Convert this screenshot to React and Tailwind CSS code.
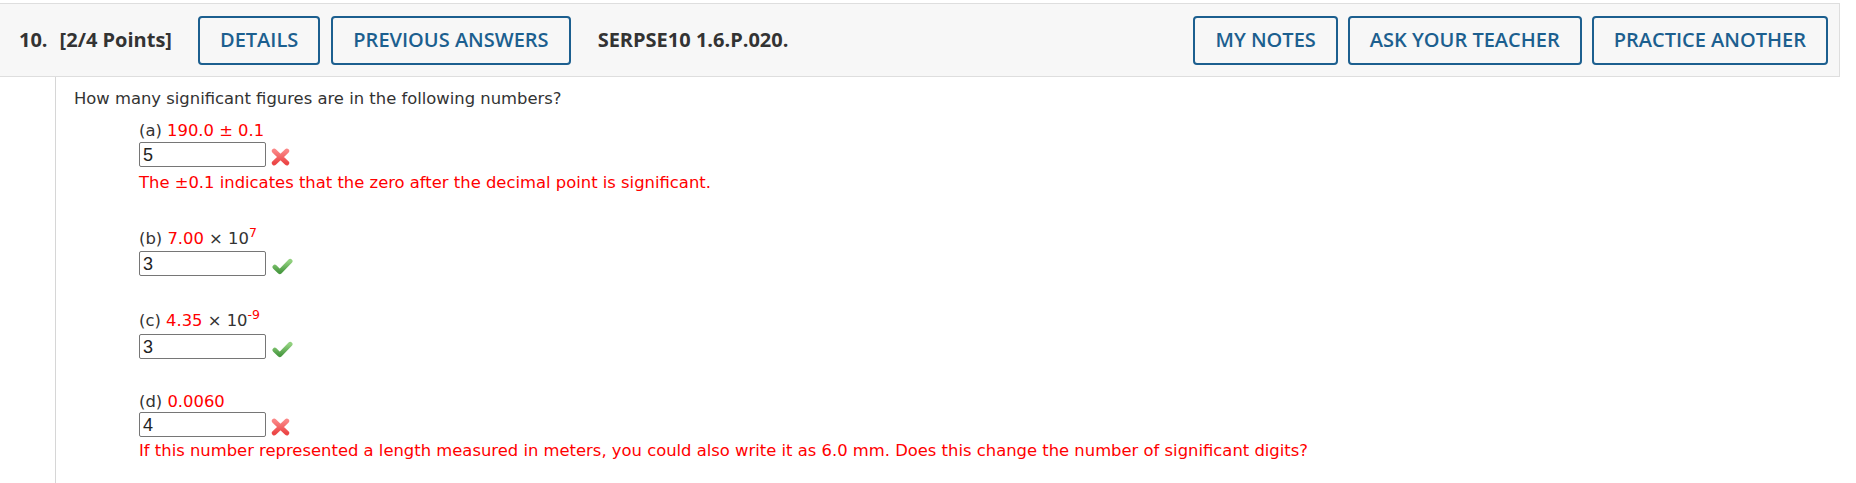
import React from "react";

const HEAD_FONT = { fontFamily: '"Open Sans", "Liberation Sans", sans-serif' };
const BODY_FONT = { fontFamily: '"DejaVu Sans", Verdana, sans-serif' };

function HeaderButton({ children }) {
  return (
    <button className="h-[49px] px-[20px] rounded-[4px] border-2 border-[#1c5f8f] text-[#1c5f8f] text-[20px] font-semibold bg-[#f7f7f7] leading-none">
      {children}
    </button>
  );
}

function WrongIcon() {
  return (
    <svg width="19" height="18" viewBox="0 0 19 18" className="mb-[1px]">
      <defs>
        <linearGradient id="xg" x1="0" y1="0" x2="0" y2="1">
          <stop offset="0" stopColor="#fa8585" />
          <stop offset="1" stopColor="#ec4646" />
        </linearGradient>
      </defs>
      <path d="M3.2 3 L15.8 15 M15.8 3 L3.2 15" stroke="url(#xg)" strokeWidth="4.8" strokeLinecap="round" fill="none" />
    </svg>
  );
}

function RightIcon() {
  return (
    <svg width="21" height="17" viewBox="0 0 21 17" className="mb-[1px] ml-[1px]">
      <defs>
        <linearGradient id="cg" x1="0" y1="0" x2="0" y2="1">
          <stop offset="0" stopColor="#92d17f" />
          <stop offset="1" stopColor="#4a9a42" />
        </linearGradient>
      </defs>
      <path d="M2.8 9 L7.8 13.8 L18.2 3.2" stroke="url(#cg)" strokeWidth="4.6" strokeLinecap="round" strokeLinejoin="round" fill="none" />
    </svg>
  );
}

function AnswerBox({ value, correct, className = "" }) {
  return (
    <div className={`flex items-end gap-[5px] ${className}`}>
      <div
        className="w-[127px] h-[25px] border border-[#767676] rounded-[2px] bg-white pl-[3px] flex items-center text-[18px] text-[#222]"
        style={{ fontFamily: '"Liberation Sans", Arial, sans-serif' }}
      >
        {value}
      </div>
      {correct ? <RightIcon /> : <WrongIcon />}
    </div>
  );
}

function Sup({ children }) {
  return <span className="relative -top-[7px] text-[12.5px] leading-none text-[#ff0000]">{children}</span>;
}

export default function App() {
  return (
    <div className="w-[1856px] h-[483px] bg-white overflow-hidden">
      {/* question header */}
      <div
        className="mt-[3px] w-[1840px] h-[74px] bg-[#f7f7f7] border-t border-r border-b border-[#dedede] flex items-center pl-[19px] pr-[11px]"
        style={HEAD_FONT}
      >
        <div className="text-[20px] font-bold text-[#333] w-[179px] whitespace-nowrap">
          10.<span className="ml-[12px]">[2/4 Points]</span>
        </div>
        <div className="flex gap-[11px]">
          <HeaderButton>DETAILS</HeaderButton>
          <HeaderButton>PREVIOUS ANSWERS</HeaderButton>
        </div>
        <div className="ml-[27px] text-[20px] font-bold text-[#333]">SERPSE10 1.6.P.020.</div>
        <div className="ml-auto flex gap-[10px]">
          <HeaderButton>MY NOTES</HeaderButton>
          <HeaderButton>ASK YOUR TEACHER</HeaderButton>
          <HeaderButton>PRACTICE ANOTHER</HeaderButton>
        </div>
      </div>

      {/* question body */}
      <div className="flex h-[406px]" style={BODY_FONT}>
        <div className="w-[56px] border-r border-[#d6d6d6] shrink-0" />
        <div className="pl-[18px] pt-[12px] text-[16.4px] leading-[20px] text-[#333]">
          <div>How many significant figures are in the following numbers?</div>

          <div className="pl-[65px]">
            <div className="mt-[12px]">
              (a) <span className="text-[#ff0000]">190.0 ± 0.1</span>
            </div>
            <AnswerBox value="5" correct={false} className="mt-[1px]" />
            <div className="mt-[6px] text-[#ff0000]">
              The ±0.1 indicates that the zero after the decimal point is significant.
            </div>

            <div className="mt-[36px]">
              (b) <span className="text-[#ff0000]">7.00</span> × 10<Sup>7</Sup>
            </div>
            <AnswerBox value="3" correct className="mt-[2px]" />

            <div className="mt-[35px]">
              (c) <span className="text-[#ff0000]">4.35</span> × 10<Sup>-9</Sup>
            </div>
            <AnswerBox value="3" correct className="mt-[3px]" />

            <div className="mt-[33px]">
              (d) <span className="text-[#ff0000]">0.0060</span>
            </div>
            <AnswerBox value="4" correct={false} />
            <div className="mt-[4px] text-[#ff0000]">
              If this number represented a length measured in meters, you could also write it as 6.0 mm. Does this
              change the number of significant digits?
            </div>
          </div>
        </div>
      </div>
    </div>
  );
}
